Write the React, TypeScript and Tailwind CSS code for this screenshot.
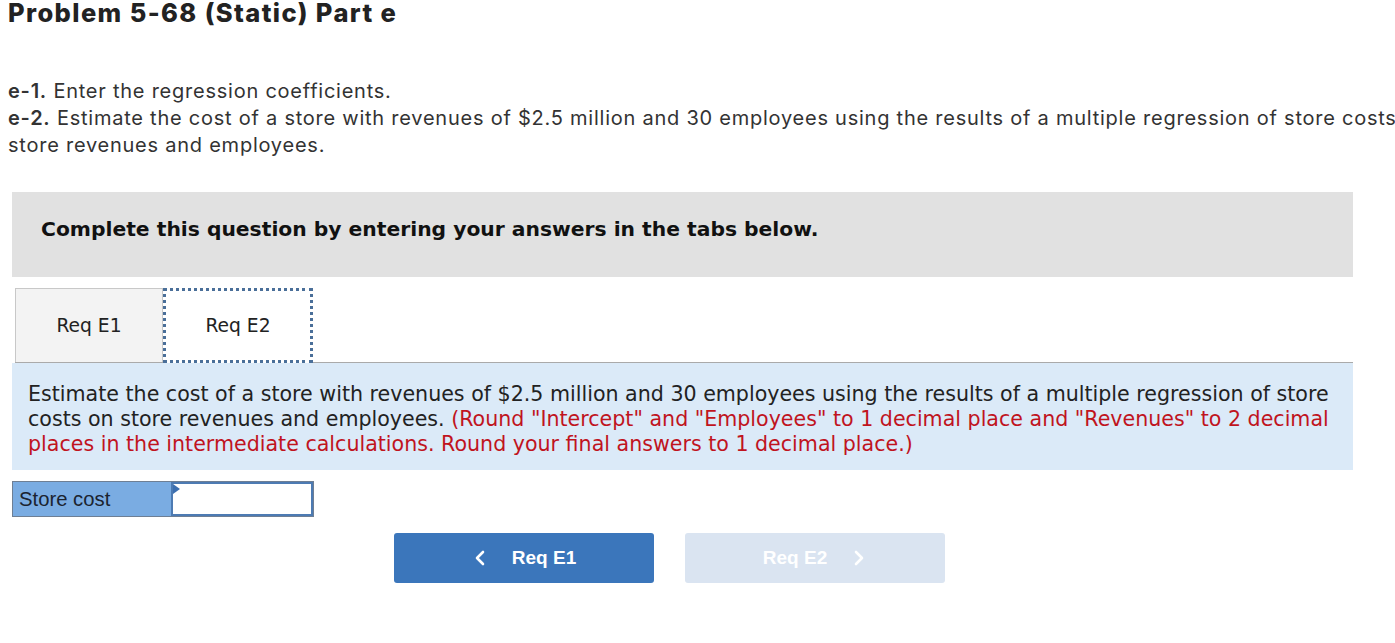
import { ChevronLeft, ChevronRight } from 'lucide-react';

export default function App() {
  return (
    <div className="w-[1395px] h-[643px] bg-white overflow-hidden relative">
      <h1 className="absolute left-[8px] top-[-6px] text-[25.5px] tracking-[1.4px] font-extrabold text-[#222] font-['Inter','Liberation_Sans',sans-serif] whitespace-nowrap">
        Problem 5-68 (Static) Part e
      </h1>

      <div className="pt-[78px] pl-[8px] text-[20px] tracking-[0.76px] leading-[27px] text-[#333] font-['Inter','Liberation_Sans',sans-serif] whitespace-nowrap">
        <p>
          <b className="font-semibold">e-1.</b> Enter the regression coefficients.
        </p>
        <p>
          <b className="font-semibold">e-2.</b> Estimate the cost of a store with revenues of $2.5 million and 30 employees using the results of a multiple regression of store costs on
        </p>
        <p>store revenues and employees.</p>
      </div>

      <div className="mt-[33px] ml-[12px] w-[1341px] font-['DejaVu_Sans','Verdana',sans-serif]">
        <div className="h-[85px] bg-[#e1e1e1] pl-[29px] pt-[22px]">
          <span className="text-[20.3px] font-bold text-[#111]">Complete this question by entering your answers in the tabs below.</span>
        </div>

        <div className="mt-[11px] ml-[3px] flex border-b border-[#aaa]">
          <div className="w-[148px] h-[74px] pt-[2px] bg-[#f3f3f3] border border-[#c8c8c8] border-b-0 flex items-center justify-center text-[18.7px] text-[#222]">
            Req E1
          </div>
          <div className="w-[150px] h-[75px] pt-[2px] -mb-px bg-white border-[3px] border-dotted border-[#4a6f99] flex items-center justify-center text-[18.7px] text-[#222]">
            Req E2
          </div>
        </div>

        <div className="h-[107px] bg-[#dbeaf8] px-[16px] pt-[19px] text-[20.6px] leading-[25px] text-[#222]">
          Estimate the cost of a store with revenues of $2.5 million and 30 employees using the results of a multiple regression of store costs on store revenues and employees.{' '}
          <span className="text-[#c0141e]">
            (Round "Intercept" and "Employees" to 1 decimal place and "Revenues" to 2 decimal places in the intermediate calculations. Round your final answers to 1 decimal place.)
          </span>
        </div>

        <div className="mt-[11px] flex w-[302px] h-[36px] border border-[#6e7f94] font-['Liberation_Sans',Arial,sans-serif]">
          <div className="w-[158px] bg-[#7aace2] flex items-center pl-[6px] text-[20.3px] text-[#1b2330]">Store cost</div>
          <div className="relative flex-1 bg-white border-[2px] border-[#4d7bb3]">
            <div className="absolute left-0 top-0 w-0 h-0 border-t-[5px] border-b-[5px] border-l-[7px] border-t-transparent border-b-transparent border-l-[#3c6fb0]" />
          </div>
        </div>

        <div className="mt-[16px] ml-[382px] flex gap-[31px] font-['Liberation_Sans',Arial,sans-serif]">
          <button className="w-[260px] h-[50px] rounded-[3px] bg-[#3b76bb] text-white text-[19px] font-bold flex items-center justify-center gap-[20px] pr-[4px]">
            <ChevronLeft className="w-[24px] h-[24px]" strokeWidth={2.6} />
            <span>Req E1</span>
          </button>
          <button className="w-[260px] h-[50px] rounded-[3px] bg-[#dae4f1] text-white text-[19px] font-bold flex items-center justify-center gap-[20px] pl-[4px]">
            <span>Req E2</span>
            <ChevronRight className="w-[24px] h-[24px]" strokeWidth={2.6} />
          </button>
        </div>
      </div>
    </div>
  );
}
